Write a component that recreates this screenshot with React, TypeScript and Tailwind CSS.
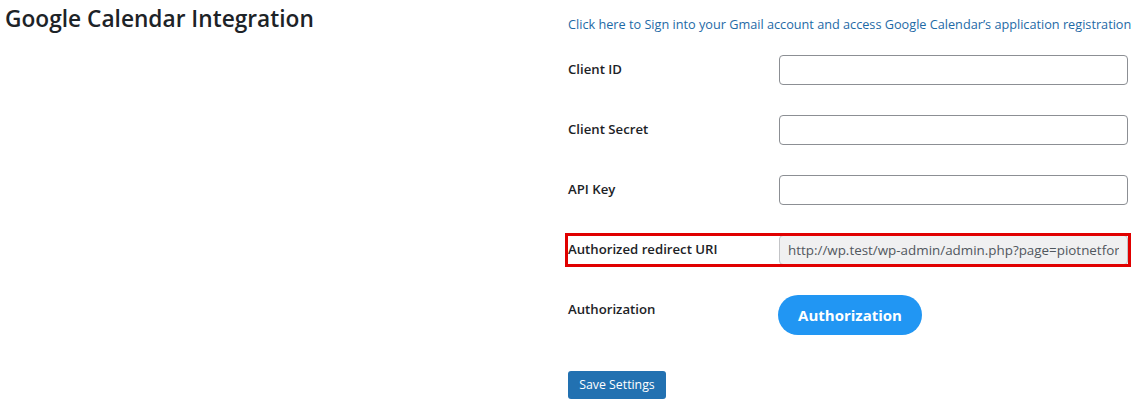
export default function App() {
    const rows = [
        { label: "Client ID", value: "" },
        { label: "Client Secret", value: "" },
        { label: "API Key", value: "" },
    ];

    return (
        <div className="w-[1137px] h-[403px] bg-white flex font-['Open_Sans',sans-serif] text-[#1d2327]">
            <div className="w-[568px] shrink-0 pl-[5px] pt-[4px]">
                <h1 className="text-[22.7px] leading-[30px] font-semibold">Google Calendar Integration</h1>
            </div>

            <div className="w-[566px] shrink-0">
                <a href="#" className="block mt-[16px] text-[12.7px] leading-[16px] text-[#1e6aa6] whitespace-nowrap">
                    Click here to Sign into your Gmail account and access Google Calendar’s application registration
                </a>

                <div className="mt-[23px]">
                    {rows.map((row) => (
                        <div key={row.label} className="flex items-start h-[60px]">
                            <label className="w-[211px] pt-[5px] text-[13.2px] leading-[18px] font-semibold">{row.label}</label>
                            <input
                                type="text"
                                defaultValue={row.value}
                                className="w-[349px] h-[30px] border border-[#8c8f94] rounded-[4px] px-2 bg-white"
                            />
                        </div>
                    ))}

                    <div className="relative flex items-start h-[60px]">
                        <span className="absolute left-[-3px] top-[-2px] w-[566px] h-[34px] border-[3px] border-[#e00000] pointer-events-none" />
                        <label className="w-[211px] pt-[5px] text-[13.2px] leading-[18px] font-semibold">Authorized redirect URI</label>
                        <input
                            type="text"
                            disabled
                            defaultValue="http://wp.test/wp-admin/admin.php?page=piotnetforms-settings"
                            className="w-[349px] h-[30px] border border-[#c3c4c7] rounded-[4px] px-2 bg-[#f0f0f1] text-[13.4px] text-[#50575e]"
                        />
                    </div>

                    <div className="flex items-start h-[76px]">
                        <label className="w-[211px] pt-[5px] text-[13.2px] leading-[18px] font-semibold">Authorization</label>
                        <button className="w-[144px] h-[40px] rounded-full bg-[#2196f3] text-white text-[15px] font-bold -ml-[1px]">
                            Authorization
                        </button>
                    </div>

                    <button className="w-[98px] h-[28px] rounded-[3px] bg-[#2271b1] text-white text-[12.3px]">
                        Save Settings
                    </button>
                </div>
            </div>
        </div>
    );
}
